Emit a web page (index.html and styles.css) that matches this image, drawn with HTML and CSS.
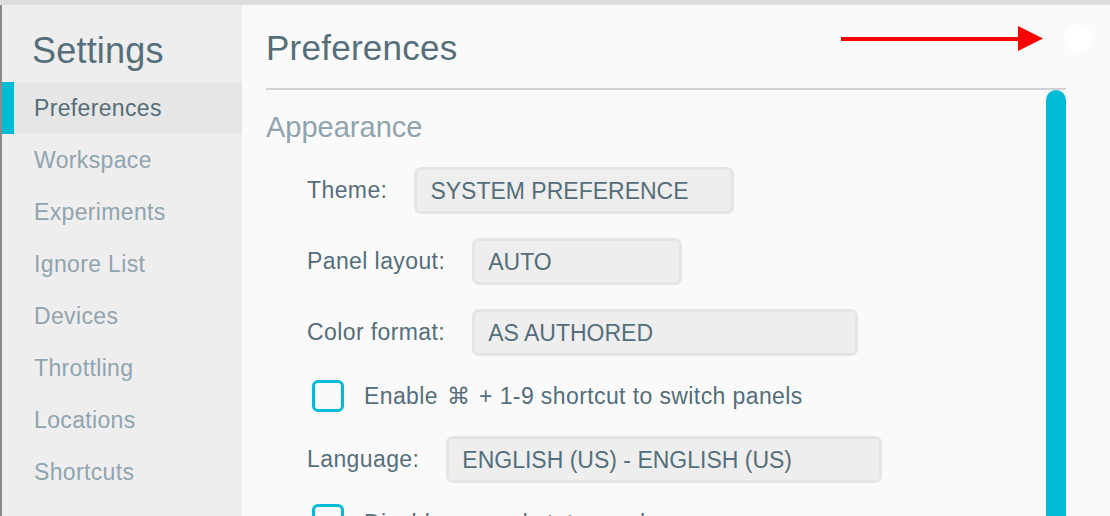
FILE: index.html
```html
<!DOCTYPE html>
<html lang="en">
<head>
    <meta charset="UTF-8">
    <meta name="viewport" content="width=device-width, initial-scale=1.0">
    <title>Settings</title>
    <link rel="stylesheet" href="styles.css">
</head>
<body>

    <div class="window">
        <nav class="sidebar">
            <h1 class="sidebar-title">Settings</h1>
            <ul class="nav-list">
                <li class="nav-item active">Preferences</li>
                <li class="nav-item">Workspace</li>
                <li class="nav-item">Experiments</li>
                <li class="nav-item">Ignore List</li>
                <li class="nav-item">Devices</li>
                <li class="nav-item">Throttling</li>
                <li class="nav-item">Locations</li>
                <li class="nav-item">Shortcuts</li>
            </ul>
        </nav>

        <main class="main">
            <header class="main-header">
                <h2>Preferences</h2>
                <!-- annotation arrow pointing at the close dot -->
                <svg class="pointer" width="202" height="25" viewBox="0 0 202 25">
                    <rect x="0" y="11" width="180" height="4" fill="#ff0000"/>
                    <polygon points="177,0 202,12.5 177,25" fill="#ff0000"/>
                </svg>
                <span class="close-dot"></span>
            </header>

            <div class="content">
                <section class="section">
                    <h3>Appearance</h3>

                    <div class="row">
                        <label for="theme">Theme:</label>
                        <select id="theme" class="select select-theme">
                            <option>SYSTEM PREFERENCE</option>
                        </select>
                    </div>

                    <div class="row">
                        <label for="layout">Panel layout:</label>
                        <select id="layout" class="select select-layout">
                            <option>AUTO</option>
                        </select>
                    </div>

                    <div class="row">
                        <label for="color">Color format:</label>
                        <select id="color" class="select select-color">
                            <option>AS AUTHORED</option>
                        </select>
                    </div>

                    <div class="row check-row">
                        <input type="checkbox" id="shortcut">
                        <label for="shortcut">Enable <span class="cmd">⌘</span> + 1-9 shortcut to switch panels</label>
                    </div>

                    <div class="row">
                        <label for="language">Language:</label>
                        <select id="language" class="select select-language">
                            <option>ENGLISH (US) - ENGLISH (US)</option>
                        </select>
                    </div>

                    <div class="row check-row last">
                        <input type="checkbox" id="overlay">
                        <label for="overlay">Disable paused state overlay</label>
                    </div>
                </section>
                <div class="scroll-thumb"></div>
            </div>
        </main>
    </div>

</body>
</html>
```

FILE: styles.css
```css
body {
    margin: 0;
    font-family: "Liberation Sans", Arial, sans-serif;
    color: #546e7a;
    overflow: hidden;
}

.window {
    display: flex;
    height: 516px;
    border-top: 5px solid #dddddd;
    box-sizing: border-box;
    background-color: #fafafa;
}

/* sidebar */
.sidebar {
    width: 240px;
    flex-shrink: 0;
    background-color: #eeeeee;
    border-left: 2px solid #8a8a8a;
}

.sidebar-title {
    margin: 0;
    height: 77px;
    padding: 14px 0 0 30px;
    box-sizing: border-box;
    font-size: 36px;
    font-weight: normal;
    line-height: 64px;
    letter-spacing: 0.2px;
}

.nav-list {
    list-style: none;
    margin: 0;
    padding: 0;
}

.nav-item {
    height: 52px;
    line-height: 52px;
    padding-left: 32px;
    font-size: 23px;
    letter-spacing: 0.35px;
    color: #90a4ae;
}

.nav-item.active {
    background-color: #e6e6e6;
    border-left: 12px solid #00bcd4;
    padding-left: 20px;
    color: #546e7a;
}

/* main panel */
.main {
    flex: 1;
    display: flex;
    flex-direction: column;
    padding: 0 44px 0 24px;
    position: relative;
}

.main-header {
    height: 83px;
    flex-shrink: 0;
    border-bottom: 2px solid #cfd3d6;
}

.main-header h2 {
    margin: 0;
    padding-top: 17px;
    font-size: 35px;
    font-weight: normal;
    line-height: 52px;
    letter-spacing: 0.25px;
}

.pointer {
    position: absolute;
    left: 599px;
    top: 21px;
}

.close-dot {
    position: absolute;
    right: 18px;
    top: 19px;
    width: 28px;
    height: 28px;
    border-radius: 50%;
    background-color: #ffffff;
}

.content {
    flex: 1;
    display: flex;
    min-height: 0;
}

.section {
    flex: 1;
}

.section h3 {
    margin: 19px 0 22px;
    font-size: 29px;
    font-weight: normal;
    line-height: 36px;
    color: #90a4ae;
}

.row {
    display: flex;
    align-items: center;
    gap: 27px;
    height: 47px;
    margin: 0 0 24px 41px;
    font-size: 23px;
}

.row label {
    letter-spacing: 0.4px;
}

.select {
    appearance: none;
    -webkit-appearance: none;
    height: 47px;
    box-sizing: border-box;
    padding: 0 0 0 13px;
    border: 3px solid #e5e5e5;
    border-radius: 7px;
    background-color: #eeeeee;
    font-family: inherit;
    font-size: 23px;
    color: #546e7a;
}

.select-theme { width: 320px; }
.select-layout { width: 210px; }
.select-color { width: 386px; }
.select-language { width: 436px; }

.check-row {
    height: 32px;
    gap: 20px;
    margin-left: 46px;
}

.check-row.last {
    margin-top: -3px;
}

.check-row.last label {
    margin-top: 6px;
}

.cmd {
    padding: 0 2px;
}

.check-row input {
    appearance: none;
    -webkit-appearance: none;
    width: 32px;
    height: 32px;
    margin: 0;
    border: 3px solid #00bcd4;
    border-radius: 6px;
    background: transparent;
}

.scroll-thumb {
    width: 20px;
    flex-shrink: 0;
    background-color: #00bcd4;
    border-radius: 10px 10px 0 0;
}
```
